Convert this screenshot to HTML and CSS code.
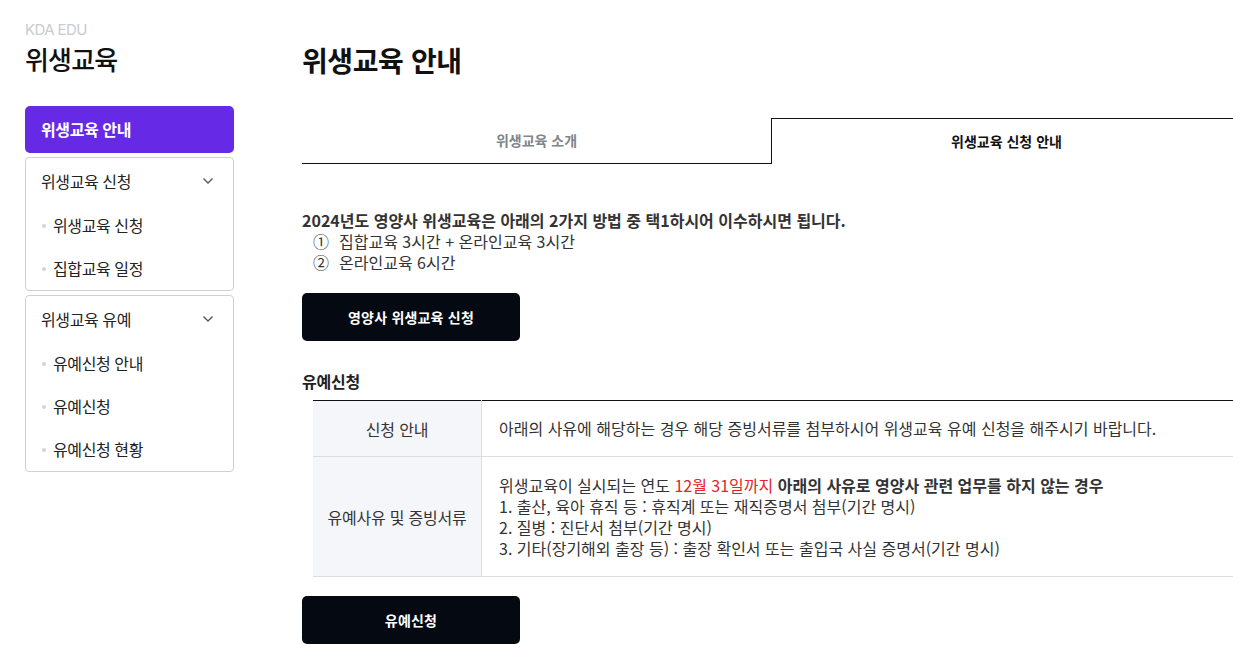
FILE: index.html
```html
<!DOCTYPE html>
<html lang="ko">
<head>
    <meta charset="UTF-8">
    <title>위생교육 안내</title>
    <link rel="stylesheet" href="styles.css">
</head>
<body>
    <div class="page">
        <aside class="sidebar">
            <div class="brand">KDA EDU</div>
            <h2 class="side-title">위생교육</h2>
            <nav class="menu">
                <a class="menu-active" href="#">위생교육 안내</a>
                <div class="menu-group">
                    <div class="group-head">
                        <span>위생교육 신청</span>
                        <svg class="chev" width="12" height="8" viewBox="0 0 12 8"><path d="M1.5 1.5 L6 6 L10.5 1.5" fill="none" stroke="#555" stroke-width="1.3"/></svg>
                    </div>
                    <ul class="sub">
                        <li>위생교육 신청</li>
                        <li>집합교육 일정</li>
                    </ul>
                </div>
                <div class="menu-group">
                    <div class="group-head">
                        <span>위생교육 유예</span>
                        <svg class="chev" width="12" height="8" viewBox="0 0 12 8"><path d="M1.5 1.5 L6 6 L10.5 1.5" fill="none" stroke="#555" stroke-width="1.3"/></svg>
                    </div>
                    <ul class="sub">
                        <li>유예신청 안내</li>
                        <li>유예신청</li>
                        <li>유예신청 현황</li>
                    </ul>
                </div>
            </nav>
        </aside>

        <main class="content">
            <h1 class="page-title">위생교육 안내</h1>
            <div class="tabs">
                <div class="tab">위생교육 소개</div>
                <div class="tab tab-on">위생교육 신청 안내</div>
            </div>

            <div class="intro">
                <p class="intro-lead">2024년도 영양사 위생교육은 아래의 2가지 방법 중 택1하시어 이수하시면 됩니다.</p>
                <p class="intro-item"><span class="num">①</span>집합교육 3시간 + 온라인교육 3시간</p>
                <p class="intro-item"><span class="num">②</span>온라인교육 6시간</p>
            </div>
            <button class="btn-dark">영양사 위생교육 신청</button>

            <h3 class="sec-title">유예신청</h3>
            <table class="info">
                <tr>
                    <th>신청 안내</th>
                    <td>아래의 사유에 해당하는 경우 해당 증빙서류를 첨부하시어 위생교육 유예 신청을 해주시기 바랍니다.</td>
                </tr>
                <tr class="tall">
                    <th>유예사유 및 증빙서류</th>
                    <td>
                        위생교육이 실시되는 연도 <span class="red">12월 31일까지</span> <b>아래의 사유로 영양사 관련 업무를 하지 않는 경우</b><br>
                        1. 출산, 육아 휴직 등 : 휴직계 또는 재직증명서 첨부(기간 명시)<br>
                        2. 질병 : 진단서 첨부(기간 명시)<br>
                        3. 기타(장기해외 출장 등) : 출장 확인서 또는 출입국 사실 증명서(기간 명시)
                    </td>
                </tr>
            </table>
            <button class="btn-dark">유예신청</button>
        </main>
    </div>
</body>
</html>
```

FILE: styles.css
```css
body {
    margin: 0;
    padding: 0;
    font-family: "Noto Sans CJK KR", "Noto Sans", sans-serif;
    color: #222;
    background: #fff;
    overflow: hidden;
}

.page {
    display: flex;
    padding-left: 25px;
}

.sidebar {
    width: 209px;
    flex-shrink: 0;
    padding-top: 20px;
}

.brand {
    font-family: Inter, "Noto Sans", sans-serif;
    font-size: 15px;
    color: #c9cbd0;
    letter-spacing: -0.6px;
    line-height: 20px;
}

.side-title {
    margin: 1px 0 0;
    font-size: 26px;
    font-weight: 500;
    color: #111;
    line-height: 36px;
    letter-spacing: -0.8px;
}

.menu {
    margin-top: 29px;
    display: flex;
    flex-direction: column;
    gap: 4px;
}

.menu-active {
    display: block;
    height: 47px;
    line-height: 46px;
    padding-left: 16px;
    background: #6629e6;
    color: #fff;
    font-size: 16px;
    font-weight: 700;
    text-decoration: none;
    border-radius: 5px;
    letter-spacing: -0.4px;
}

.menu-group {
    border: 1px solid #cfd0d4;
    border-radius: 4px;
}

.group-head {
    display: flex;
    justify-content: space-between;
    align-items: center;
    height: 46px;
    padding: 0 19px 0 15px;
    font-size: 16px;
    color: #222;
    letter-spacing: -0.4px;
}

.sub {
    list-style: none;
    margin: 0;
    padding: 0 0 0 16px;
}

.sub li {
    position: relative;
    height: 43px;
    line-height: 42px;
    padding-left: 11px;
    font-size: 16px;
    color: #222;
    letter-spacing: -0.4px;
}

.sub li::before {
    content: "";
    position: absolute;
    left: 0;
    top: 20px;
    width: 4px;
    height: 4px;
    border-radius: 50%;
    background: #d3d4d8;
}

.content {
    margin-left: 68px;
    width: 940px;
    flex-shrink: 0;
    padding-top: 38px;
}

.page-title {
    margin: 0;
    font-size: 28px;
    font-weight: 700;
    line-height: 44px;
    color: #111;
    letter-spacing: -0.4px;
}

.tabs {
    display: flex;
    margin-top: 36px;
}

.tab {
    flex: 1;
    height: 45px;
    line-height: 44px;
    text-align: center;
    font-size: 14px;
    font-weight: 700;
    color: #80858c;
    border-bottom: 1px solid #111;
    letter-spacing: 0;
}

.tab-on {
    color: #111;
    border: 1px solid #111;
    border-bottom: none;
}

.intro {
    margin-top: 46px;
    font-size: 16px;
    line-height: 21px;
    color: #333;
    letter-spacing: 0;
}

.intro p {
    margin: 0;
}

.intro-lead {
    font-weight: 700;
}

.intro-item {
    padding-left: 11px;
}

.num {
    display: inline-block;
    width: 26px;
}

.btn-dark {
    display: block;
    width: 218px;
    height: 48px;
    margin-top: 20px;
    border: none;
    border-radius: 5px;
    background: #050a12;
    color: #fff;
    font-family: inherit;
    font-size: 14px;
    font-weight: 700;
    letter-spacing: 0.2px;
    cursor: pointer;
}

.sec-title {
    margin: 29px 0 0;
    font-size: 16px;
    font-weight: 700;
    line-height: 22px;
    color: #222;
    letter-spacing: -0.2px;
}

.info {
    margin: 8px 0 0 11px;
    width: 929px;
    border-collapse: collapse;
    border-top: 1px solid #111;
    font-size: 16px;
    color: #333;
    letter-spacing: 0;
}

.info th {
    width: 168px;
    background: #f5f6fa;
    font-weight: 400;
    border-right: 1px solid #dcdde0;
    border-bottom: 1px solid #dcdde0;
    height: 55px;
    padding: 0;
    letter-spacing: -0.2px;
}

.info td {
    padding: 0 0 0 17px;
    border-bottom: 1px solid #dcdde0;
    line-height: 21px;
}

.info .tall th,
.info .tall td {
    height: 119px;
}

.red {
    color: #e0262b;
}

.info b {
    font-weight: 700;
}

.info + .btn-dark {
    margin-top: 19px;
}
```
